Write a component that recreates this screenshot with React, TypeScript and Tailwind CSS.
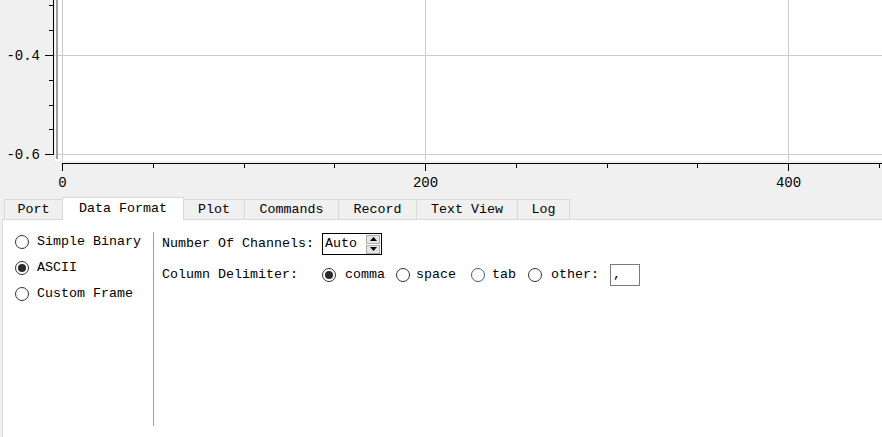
import React from "react";

const Radio = ({ checked = false, ring = "border-[#333333]" }: { checked?: boolean; ring?: string }) => (
  <span className={`w-[14px] h-[14px] rounded-full border ${ring} bg-white flex items-center justify-center shrink-0`}>
    {checked && <span className="w-[8px] h-[8px] rounded-full bg-[#2b2b2b]" />}
  </span>
);

const Chart = () => {
  const minorX = [153, 244, 334, 516, 607, 697, 879];
  const majorX = [62, 425, 788];
  const minorY = [5, 30, 80, 105, 129];
  const majorY = [55, 154];
  return (
    <svg width={882} height={197} className="block">
      <rect x={0} y={0} width={882} height={197} fill="#f0f0f0" />
      <rect x={55} y={0} width={827} height={161} fill="#ffffff" />
      {majorY.map((y) => (
        <line key={"gy" + y} x1={55} x2={882} y1={y + 0.5} y2={y + 0.5} stroke="#cccccc" />
      ))}
      {majorX.map((x) => (
        <line key={"gx" + x} x1={x + 0.5} x2={x + 0.5} y1={0} y2={161} stroke="#cccccc" />
      ))}
      <rect x={56} y={0} width={2} height={159} fill="#a0a0a0" />
      <line x1={53.5} x2={53.5} y1={0} y2={155} stroke="#000" />
      {minorY.map((y) => (
        <line key={"my" + y} x1={49} x2={53} y1={y + 0.5} y2={y + 0.5} stroke="#000" />
      ))}
      {majorY.map((y) => (
        <line key={"My" + y} x1={45} x2={53} y1={y + 0.5} y2={y + 0.5} stroke="#000" />
      ))}
      <text x={40} y={60} textAnchor="end" fontFamily="Liberation Mono" fontSize={14} fill="#000">-0.4</text>
      <text x={40} y={159} textAnchor="end" fontFamily="Liberation Mono" fontSize={14} fill="#000">-0.6</text>
      <line x1={62} x2={882} y1={163.5} y2={163.5} stroke="#000" />
      {minorX.map((x) => (
        <line key={"mx" + x} x1={x + 0.5} x2={x + 0.5} y1={163} y2={168} stroke="#000" />
      ))}
      {majorX.map((x) => (
        <line key={"Mx" + x} x1={x + 0.5} x2={x + 0.5} y1={163} y2={171} stroke="#000" />
      ))}
      <text x={62.5} y={187} textAnchor="middle" fontFamily="Liberation Mono" fontSize={14} fill="#000">0</text>
      <text x={425.5} y={187} textAnchor="middle" fontFamily="Liberation Mono" fontSize={14} fill="#000">200</text>
      <text x={788.5} y={187} textAnchor="middle" fontFamily="Liberation Mono" fontSize={14} fill="#000">400</text>
    </svg>
  );
};

const tabs = [
  { label: "Port", w: "w-[59px]" },
  { label: "Data Format", w: "w-[122px]", active: true },
  { label: "Plot", w: "w-[62px]" },
  { label: "Commands", w: "w-[95px]" },
  { label: "Record", w: "w-[79px]" },
  { label: "Text View", w: "w-[102px]" },
  { label: "Log", w: "w-[53px]" },
];

export default function App() {
  return (
    <div className="w-[882px] h-[437px] bg-[#f0f0f0] overflow-hidden font-['Liberation_Mono',monospace] text-[13.33px] text-black leading-none">
      <Chart />
      <div className="h-[22px] flex items-end pl-[4px]">
        {tabs.map((t, i) =>
          t.active ? (
            <div
              key={t.label}
              className={`${t.w} h-[23px] -mb-px relative z-10 bg-white border-l border-r border-t border-[#d9d9d9] flex items-center justify-center ${i > 0 ? "-ml-px" : ""}`}
            >
              {t.label}
            </div>
          ) : (
            <div
              key={t.label}
              className={`${t.w} h-[20px] bg-[#f0f0f0] border-l border-r border-t border-[#d9d9d9] flex items-center justify-center pt-px ${i > 0 ? "-ml-px" : ""}`}
            >
              {t.label}
            </div>
          )
        )}
      </div>
      <div className="ml-[2px] h-[218px] bg-white border-l border-t border-[#d9d9d9] flex">
        <div className="w-[150px] pt-[9px] pl-[12px] flex flex-col">
          <div className="h-[26px] flex items-center gap-[8px]">
            <Radio />
            <span>Simple Binary</span>
          </div>
          <div className="h-[26px] flex items-center gap-[8px]">
            <Radio checked />
            <span>ASCII</span>
          </div>
          <div className="h-[26px] flex items-center gap-[8px]">
            <Radio />
            <span>Custom Frame</span>
          </div>
        </div>
        <div className="w-px h-[194px] mt-[12px] bg-[#a0a0a0]" />
        <div className="pl-[8px] pt-[13px] flex flex-col gap-[9px]">
          <div className="h-[22px] flex items-center">
            <span className="w-[160px]">Number Of Channels:</span>
            <div className="w-[60px] h-[22px] border border-black bg-white flex items-center justify-between pl-[2px] pr-px">
              <span>Auto</span>
              <div className="flex flex-col gap-px">
                <div className="w-[14px] h-[9px] bg-[#e5e5e5] border border-[#adadad] flex items-center justify-center">
                  <svg width="7" height="4" viewBox="0 0 7 4"><path d="M0 4 L3.5 0 L7 4 Z" fill="#000" /></svg>
                </div>
                <div className="w-[14px] h-[9px] bg-[#e5e5e5] border border-[#adadad] flex items-center justify-center">
                  <svg width="7" height="4" viewBox="0 0 7 4"><path d="M0 0 L3.5 4 L7 0 Z" fill="#000" /></svg>
                </div>
              </div>
            </div>
          </div>
          <div className="h-[22px] flex items-center">
            <span className="w-[160px]">Column Delimiter:</span>
            <div className="flex items-center">
              <div className="w-[74px] flex items-center gap-[9px]">
                <Radio checked />
                <span>comma</span>
              </div>
              <div className="w-[75px] flex items-center gap-[6px]">
                <Radio />
                <span>space</span>
              </div>
              <div className="w-[57px] flex items-center gap-[7px]">
                <Radio ring="border-[#3b5f8c]" />
                <span>tab</span>
              </div>
              <div className="w-[82px] flex items-center gap-[9px]">
                <Radio />
                <span>other:</span>
              </div>
              <div className="w-[30px] h-[22px] border border-[#7a7a7a] bg-white pl-[2px] flex items-end pb-[4px]">
                <span>,</span>
              </div>
            </div>
          </div>
        </div>
      </div>
    </div>
  );
}
